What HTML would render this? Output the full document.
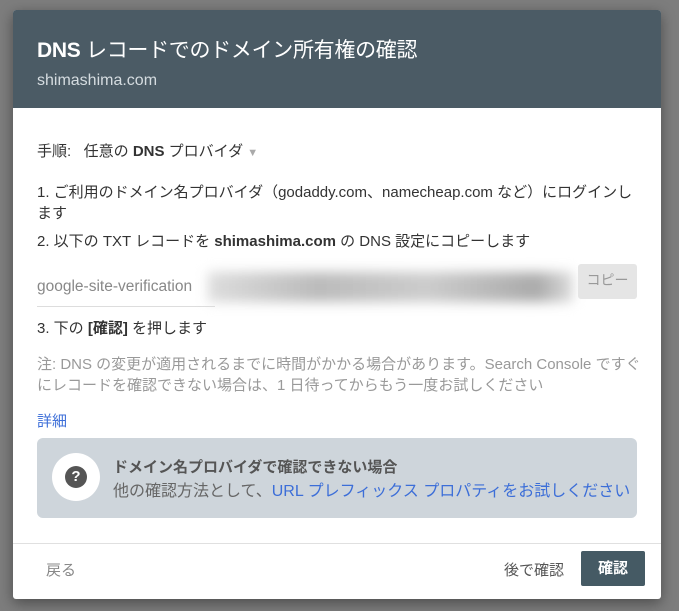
<!DOCTYPE html>
<html><head><meta charset="utf-8"><style>
*{margin:0;padding:0;box-sizing:border-box}
body{width:679px;height:611px;background:#7d7d7d;font-family:"Liberation Sans","Noto Sans CJK JP",sans-serif;position:relative;overflow:hidden;color:#333}
.dlg{position:absolute;left:13px;top:10px;width:648px;height:589px;background:#fff;border-radius:3px;overflow:hidden;box-shadow:0 4px 14px rgba(0,0,0,.4)}
.hd{background:#4b5b65;height:98px;padding:24px 24px 0}
.hd h1{font-size:21px;color:#fff;font-weight:normal;letter-spacing:-0.3px}
.hd h1 b{font-weight:bold}
.hd p{font-size:16px;color:#d5dce0;margin-top:8px}
.t{position:absolute;font-size:15px;white-space:nowrap}
.note{color:#999}
.a{color:#3c6ed8}
.copy{position:absolute;left:565px;top:254px;width:59px;height:35px;background:#e5e5e5;border-radius:3px;color:#999;font-size:14px;text-align:center;line-height:32px}
.blur{position:absolute;left:195px;top:262px;width:365px;height:30px;filter:blur(6px);background:linear-gradient(90deg,#ddd,#bbb 30%,#ccc 60%,#aaa 90%,#ddd)}
.box{position:absolute;left:24px;top:428px;width:600px;height:80px;background:#ced5db;border-radius:6px}
.circ{position:absolute;left:15px;top:15px;width:48px;height:48px;border-radius:50%;background:#fff}
.q{position:absolute;left:13px;top:13px;width:22px;height:22px;border-radius:50%;background:#555;color:#fff;font-weight:bold;font-size:15px;text-align:center;line-height:22px}
.ft{position:absolute;left:0;top:533px;width:648px;border-top:1px solid #e0e0e0;height:56px}
.btn{position:absolute;left:568px;top:541px;width:64px;height:35px;background:#455a64;color:#fff;font-size:15px;font-weight:bold;text-align:center;line-height:35px;border-radius:2px}
</style></head><body>
<div class="dlg">
<div class="hd"><h1><b>DNS</b> レコードでのドメイン所有権の確認</h1><p>shimashima.com</p></div>
<div class="t" style="left:24px;top:130px;">手順:&nbsp;&nbsp; 任意の <b>DNS</b> プロバイダ <span style="color:#aaa;font-size:11px">▼</span></div>
<div class="t" style="left:24px;top:171px;">1. ご利用のドメイン名プロバイダ（godaddy.com、namecheap.com など）にログインし</div>
<div class="t" style="left:24px;top:192px;">ます</div>
<div class="t" style="left:24px;top:220px;">2. 以下の TXT レコードを <b>shimashima.com</b> の DNS 設定にコピーします</div>
<div class="t note" style="left:24px;top:268px;color:#888;font-size:15.5px">google-site-verification</div>
<div style="position:absolute;left:24px;top:296px;width:178px;border-top:1px solid #ddd"></div>
<div class="blur"></div>
<div class="copy">コピー</div>
<div class="t" style="left:24px;top:307px;">3. 下の <b>[確認]</b> を押します</div>
<div class="t note" style="left:24px;top:343px;">注: DNS の変更が適用されるまでに時間がかかる場合があります。Search Console ですぐ</div>
<div class="t note" style="left:24px;top:364px;">にレコードを確認できない場合は、1 日待ってからもう一度お試しください</div>
<div class="t a" style="left:24px;top:400px;">詳細</div>
<div class="box"><div class="circ"><div class="q">?</div></div>
<div class="t" style="left:76px;top:18px;font-weight:bold;color:#555">ドメイン名プロバイダで確認できない場合</div>
<div class="t" style="left:76px;top:39px;font-size:16px;color:#666">他の確認方法として、<span class="a">URL プレフィックス プロパティをお試しください</span></div>
</div>
<div class="ft"></div>
<div class="t" style="left:33px;top:549px;color:#888">戻る</div>
<div class="t" style="left:491px;top:549px;color:#555">後で確認</div>
<div class="btn">確認</div>
</div>
</body></html>
